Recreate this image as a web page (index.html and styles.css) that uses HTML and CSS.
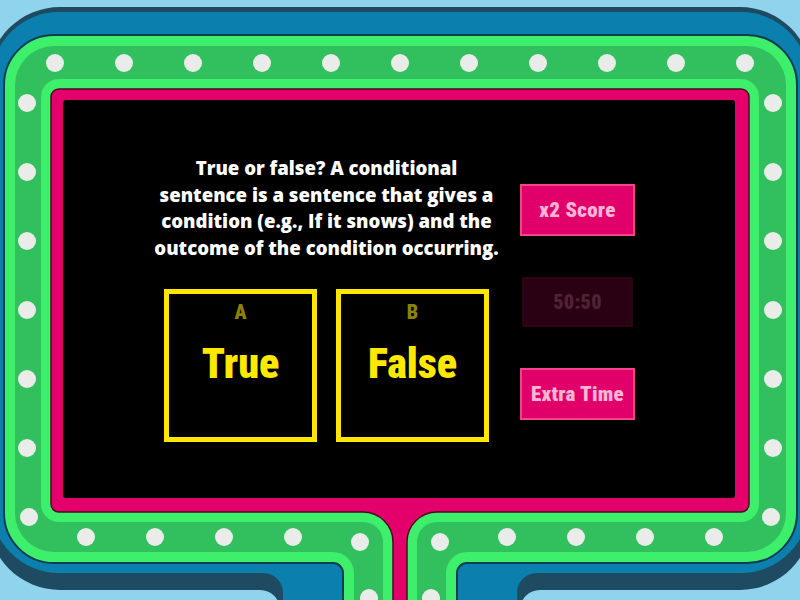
FILE: index.html
```html
<!DOCTYPE html>
<html lang="en">
<head>
<meta charset="utf-8">
<title>Gameshow quiz</title>
<link rel="stylesheet" href="styles.css">
</head>
<body>
<div class="stage">
  <svg class="frame" width="800" height="600" viewBox="0 0 800 600" aria-hidden="true">
    <rect class="sky" x="0" y="0" width="800" height="600"/>
    <path class="board-edge" d="M60,7 H740 A72,72 0 0 1 812,79 V518 A72,72 0 0 1 740,590 H540 A20,20 0 0 0 520,610 V640 H280 V610 A20,20 0 0 0 260,590 H60 A72,72 0 0 1 -12,518 V79 A72,72 0 0 1 60,7 Z"/>
    <path class="board" d="M59,12 H741 A68,68 0 0 1 809,80 V505 A68,68 0 0 1 741,573 H537 A20,20 0 0 0 517,593 V640 H283 V593 A20,20 0 0 0 263,573 H59 A68,68 0 0 1 -9,505 V80 A68,68 0 0 1 59,12 Z"/>
    <path class="ring-light ring-outline" d="M54,35 H747 A50,50 0 0 1 797,85 V513 A50,50 0 0 1 747,563 H467 A10,10 0 0 0 457,573 V620 H343 V573 A10,10 0 0 0 333,563 H54 A50,50 0 0 1 4,513 V85 A50,50 0 0 1 54,35 Z"/>
    <path class="ring-dark" d="M54,46 H747 A39,39 0 0 1 786,85 V513 A39,39 0 0 1 747,552 H467 A21,21 0 0 0 446,573 V620 H354 V573 A21,21 0 0 0 333,552 H54 A39,39 0 0 1 15,513 V85 A39,39 0 0 1 54,46 Z"/>
    <path class="ring-light" d="M59,79 H741 A18,18 0 0 1 759,97 V504 A18,18 0 0 1 741,522 H437 A20,20 0 0 0 417,542 V620 H383 V542 A20,20 0 0 0 363,522 H59 A18,18 0 0 1 41,504 V97 A18,18 0 0 1 59,79 Z"/>
    <path class="bezel" d="M59,89 H741 A8,8 0 0 1 749,97 V504 A8,8 0 0 1 741,512 H437 A30,30 0 0 0 407,542 V620 H393 V542 A30,30 0 0 0 363,512 H59 A8,8 0 0 1 51,504 V97 A8,8 0 0 1 59,89 Z"/>
    <rect class="glass" x="63" y="100" width="672" height="398" rx="3"/>
    <g class="bulbs">
      <circle cx="55" cy="63" r="9"/><circle cx="124" cy="63" r="9"/><circle cx="193" cy="63" r="9"/>
      <circle cx="262" cy="63" r="9"/><circle cx="331" cy="63" r="9"/><circle cx="400" cy="63" r="9"/>
      <circle cx="469" cy="63" r="9"/><circle cx="538" cy="63" r="9"/><circle cx="607" cy="63" r="9"/>
      <circle cx="676" cy="63" r="9"/><circle cx="745" cy="63" r="9"/>
      <circle cx="27" cy="103" r="9"/><circle cx="27" cy="172" r="9"/><circle cx="27" cy="241" r="9"/>
      <circle cx="27" cy="310" r="9"/><circle cx="27" cy="379" r="9"/><circle cx="27" cy="448" r="9"/>
      <circle cx="29" cy="517" r="9"/>
      <circle cx="773" cy="103" r="9"/><circle cx="773" cy="172" r="9"/><circle cx="773" cy="241" r="9"/>
      <circle cx="773" cy="310" r="9"/><circle cx="773" cy="379" r="9"/><circle cx="773" cy="448" r="9"/>
      <circle cx="771" cy="517" r="9"/>
      <circle cx="86" cy="537" r="9"/><circle cx="155" cy="537" r="9"/><circle cx="224" cy="537" r="9"/>
      <circle cx="293" cy="537" r="9"/><circle cx="360" cy="542" r="9"/><circle cx="369" cy="598" r="9"/>
      <circle cx="714" cy="537" r="9"/><circle cx="645" cy="537" r="9"/><circle cx="576" cy="537" r="9"/>
      <circle cx="507" cy="537" r="9"/><circle cx="440" cy="542" r="9"/><circle cx="431" cy="598" r="9"/>
    </g>
  </svg>

  <main class="screen">
    <section class="play">
      <p class="question">True or false? A conditional sentence is a sentence that gives a condition (e.g., If it snows) and the outcome of the condition occurring.</p>
      <div class="answers">
        <div class="answer">
          <span class="letter">A</span>
          <span class="choice">True</span>
        </div>
        <div class="answer">
          <span class="letter">B</span>
          <span class="choice">False</span>
        </div>
      </div>
    </section>
    <aside class="powerups">
      <div class="power">x2 Score</div>
      <div class="power used">50:50</div>
      <div class="power">Extra Time</div>
    </aside>
  </main>
</div>
</body>
</html>
```
FILE: styles.css
```css
* { box-sizing: border-box; }

html, body {
  margin: 0;
  padding: 0;
  background: #8fd3ed;
}

.stage {
  width: 800px;
  height: 600px;
  display: grid;
  overflow: hidden;
  font-family: "Open Sans", "Roboto", sans-serif;
  font-weight: 700;
}

.frame,
.screen {
  grid-area: 1 / 1;
}

.frame { display: block; }

.sky { fill: #8fd3ed; }
.board-edge { fill: #1f4b62; }
.board { fill: #0b7fae; }
.ring-light { fill: #3def6b; }
.ring-outline { stroke: #0f3d54; stroke-width: 2; }
.ring-dark { fill: #31c05d; }
.bezel { fill: #e3006b; stroke: #4a0a24; stroke-width: 1.5; }
.glass { fill: #000; }
.bulbs { fill: #e9ece9; }

.screen {
  display: flex;
  align-items: flex-start;
  padding-left: 150px;
}

.play {
  width: 353px;
  display: flex;
  flex-direction: column;
  align-items: center;
  padding-top: 155px;
}

.question {
  margin: 0;
  width: 352px;
  color: #fff;
  text-align: center;
  font-size: 18.6px;
  font-weight: 800;
  line-height: 26.7px;
  letter-spacing: 0;
}

.answers {
  display: flex;
  gap: 19px;
  margin-top: 27px;
}

.answer {
  width: 153px;
  height: 153px;
  border: 5px solid #ffe600;
  display: flex;
  flex-direction: column;
  align-items: center;
  padding-top: 6.5px;
  font-family: "Roboto Condensed", "Roboto", sans-serif;
  font-weight: 900;
}

.letter {
  color: #8a8200;
  font-size: 20px;
  line-height: 24px;
}

.choice {
  margin-top: 14.5px;
  color: #ffe800;
  font-size: 42px;
  line-height: 50px;
}

.powerups {
  margin-left: 17px;
  padding-top: 184px;
  display: flex;
  flex-direction: column;
  gap: 40px;
}

.power {
  width: 115px;
  height: 52px;
  display: flex;
  align-items: center;
  justify-content: center;
  background: #e1006a;
  border: 2px solid #f2468a;
  color: #ffb5d4;
  font-family: "Roboto Condensed", "Roboto", sans-serif;
  font-weight: 900;
  font-size: 21px;
  letter-spacing: 0.3px;
}

.power.used {
  transform: scale(0.96);
  background: #2a0013;
  border-color: #2f0417;
  color: #4f2334;
}
```
